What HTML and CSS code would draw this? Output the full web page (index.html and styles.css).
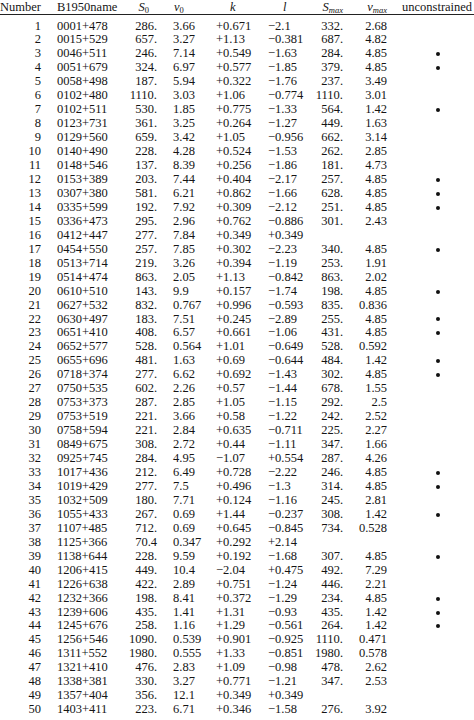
FILE: index.html
```html
<!DOCTYPE html>
<html>
<head>
<meta charset="utf-8">
<link rel="stylesheet" href="styles.css">
</head>
<body>
<div class="table">
  <div class="row head">
    <span class="n">Number</span>
    <span class="name">B1950name</span>
    <span class="s0 hs0"><i>S</i><sub>0</sub></span>
    <span class="nu hnu"><i>ν</i><sub>0</sub></span>
    <span class="k hk"><i>k</i></span>
    <span class="l hl"><i>l</i></span>
    <span class="smax"><i>S</i><sub><i>max</i></sub></span>
    <span class="numax"><i>ν</i><sub><i>max</i></sub></span>
    <span class="u hu">unconstrained</span>
  </div>
  <div class="rule"></div>
  <div class="body">
    <div class="row"><span class="n">1</span><span class="name">0001+478</span><span class="s0">286.</span><span class="nu">3.66</span><span class="k">+0.671</span><span class="l">−2.1</span><span class="smax">332.</span><span class="numax">2.68</span><span class="u"></span></div>
    <div class="row"><span class="n">2</span><span class="name">0015+529</span><span class="s0">657.</span><span class="nu">3.27</span><span class="k">+1.13</span><span class="l">−0.381</span><span class="smax">687.</span><span class="numax">4.82</span><span class="u"></span></div>
    <div class="row"><span class="n">3</span><span class="name">0046+511</span><span class="s0">246.</span><span class="nu">7.14</span><span class="k">+0.549</span><span class="l">−1.63</span><span class="smax">284.</span><span class="numax">4.85</span><span class="u"><span class="dot"></span></span></div>
    <div class="row"><span class="n">4</span><span class="name">0051+679</span><span class="s0">324.</span><span class="nu">6.97</span><span class="k">+0.577</span><span class="l">−1.85</span><span class="smax">379.</span><span class="numax">4.85</span><span class="u"><span class="dot"></span></span></div>
    <div class="row"><span class="n">5</span><span class="name">0058+498</span><span class="s0">187.</span><span class="nu">5.94</span><span class="k">+0.322</span><span class="l">−1.76</span><span class="smax">237.</span><span class="numax">3.49</span><span class="u"></span></div>
    <div class="row"><span class="n">6</span><span class="name">0102+480</span><span class="s0">1110.</span><span class="nu">3.03</span><span class="k">+1.06</span><span class="l">−0.774</span><span class="smax">1110.</span><span class="numax">3.01</span><span class="u"></span></div>
    <div class="row"><span class="n">7</span><span class="name">0102+511</span><span class="s0">530.</span><span class="nu">1.85</span><span class="k">+0.775</span><span class="l">−1.33</span><span class="smax">564.</span><span class="numax">1.42</span><span class="u"><span class="dot"></span></span></div>
    <div class="row"><span class="n">8</span><span class="name">0123+731</span><span class="s0">361.</span><span class="nu">3.25</span><span class="k">+0.264</span><span class="l">−1.27</span><span class="smax">449.</span><span class="numax">1.63</span><span class="u"></span></div>
    <div class="row"><span class="n">9</span><span class="name">0129+560</span><span class="s0">659.</span><span class="nu">3.42</span><span class="k">+1.05</span><span class="l">−0.956</span><span class="smax">662.</span><span class="numax">3.14</span><span class="u"></span></div>
    <div class="row"><span class="n">10</span><span class="name">0140+490</span><span class="s0">228.</span><span class="nu">4.28</span><span class="k">+0.524</span><span class="l">−1.53</span><span class="smax">262.</span><span class="numax">2.85</span><span class="u"></span></div>
    <div class="row"><span class="n">11</span><span class="name">0148+546</span><span class="s0">137.</span><span class="nu">8.39</span><span class="k">+0.256</span><span class="l">−1.86</span><span class="smax">181.</span><span class="numax">4.73</span><span class="u"></span></div>
    <div class="row"><span class="n">12</span><span class="name">0153+389</span><span class="s0">203.</span><span class="nu">7.44</span><span class="k">+0.404</span><span class="l">−2.17</span><span class="smax">257.</span><span class="numax">4.85</span><span class="u"><span class="dot"></span></span></div>
    <div class="row"><span class="n">13</span><span class="name">0307+380</span><span class="s0">581.</span><span class="nu">6.21</span><span class="k">+0.862</span><span class="l">−1.66</span><span class="smax">628.</span><span class="numax">4.85</span><span class="u"><span class="dot"></span></span></div>
    <div class="row"><span class="n">14</span><span class="name">0335+599</span><span class="s0">192.</span><span class="nu">7.92</span><span class="k">+0.309</span><span class="l">−2.12</span><span class="smax">251.</span><span class="numax">4.85</span><span class="u"><span class="dot"></span></span></div>
    <div class="row"><span class="n">15</span><span class="name">0336+473</span><span class="s0">295.</span><span class="nu">2.96</span><span class="k">+0.762</span><span class="l">−0.886</span><span class="smax">301.</span><span class="numax">2.43</span><span class="u"></span></div>
    <div class="row"><span class="n">16</span><span class="name">0412+447</span><span class="s0">277.</span><span class="nu">7.84</span><span class="k">+0.349</span><span class="l">+0.349</span><span class="smax"></span><span class="numax"></span><span class="u"></span></div>
    <div class="row"><span class="n">17</span><span class="name">0454+550</span><span class="s0">257.</span><span class="nu">7.85</span><span class="k">+0.302</span><span class="l">−2.23</span><span class="smax">340.</span><span class="numax">4.85</span><span class="u"><span class="dot"></span></span></div>
    <div class="row"><span class="n">18</span><span class="name">0513+714</span><span class="s0">219.</span><span class="nu">3.26</span><span class="k">+0.394</span><span class="l">−1.19</span><span class="smax">253.</span><span class="numax">1.91</span><span class="u"></span></div>
    <div class="row"><span class="n">19</span><span class="name">0514+474</span><span class="s0">863.</span><span class="nu">2.05</span><span class="k">+1.13</span><span class="l">−0.842</span><span class="smax">863.</span><span class="numax">2.02</span><span class="u"></span></div>
    <div class="row"><span class="n">20</span><span class="name">0610+510</span><span class="s0">143.</span><span class="nu">9.9</span><span class="k">+0.157</span><span class="l">−1.74</span><span class="smax">198.</span><span class="numax">4.85</span><span class="u"><span class="dot"></span></span></div>
    <div class="row"><span class="n">21</span><span class="name">0627+532</span><span class="s0">832.</span><span class="nu">0.767</span><span class="k">+0.996</span><span class="l">−0.593</span><span class="smax">835.</span><span class="numax">0.836</span><span class="u"></span></div>
    <div class="row"><span class="n">22</span><span class="name">0630+497</span><span class="s0">183.</span><span class="nu">7.51</span><span class="k">+0.245</span><span class="l">−2.89</span><span class="smax">255.</span><span class="numax">4.85</span><span class="u"><span class="dot"></span></span></div>
    <div class="row"><span class="n">23</span><span class="name">0651+410</span><span class="s0">408.</span><span class="nu">6.57</span><span class="k">+0.661</span><span class="l">−1.06</span><span class="smax">431.</span><span class="numax">4.85</span><span class="u"><span class="dot"></span></span></div>
    <div class="row"><span class="n">24</span><span class="name">0652+577</span><span class="s0">528.</span><span class="nu">0.564</span><span class="k">+1.01</span><span class="l">−0.649</span><span class="smax">528.</span><span class="numax">0.592</span><span class="u"></span></div>
    <div class="row"><span class="n">25</span><span class="name">0655+696</span><span class="s0">481.</span><span class="nu">1.63</span><span class="k">+0.69</span><span class="l">−0.644</span><span class="smax">484.</span><span class="numax">1.42</span><span class="u"><span class="dot"></span></span></div>
    <div class="row"><span class="n">26</span><span class="name">0718+374</span><span class="s0">277.</span><span class="nu">6.62</span><span class="k">+0.692</span><span class="l">−1.43</span><span class="smax">302.</span><span class="numax">4.85</span><span class="u"><span class="dot"></span></span></div>
    <div class="row"><span class="n">27</span><span class="name">0750+535</span><span class="s0">602.</span><span class="nu">2.26</span><span class="k">+0.57</span><span class="l">−1.44</span><span class="smax">678.</span><span class="numax">1.55</span><span class="u"></span></div>
    <div class="row"><span class="n">28</span><span class="name">0753+373</span><span class="s0">287.</span><span class="nu">2.85</span><span class="k">+1.05</span><span class="l">−1.15</span><span class="smax">292.</span><span class="numax">2.5</span><span class="u"></span></div>
    <div class="row"><span class="n">29</span><span class="name">0753+519</span><span class="s0">221.</span><span class="nu">3.66</span><span class="k">+0.58</span><span class="l">−1.22</span><span class="smax">242.</span><span class="numax">2.52</span><span class="u"></span></div>
    <div class="row"><span class="n">30</span><span class="name">0758+594</span><span class="s0">221.</span><span class="nu">2.84</span><span class="k">+0.635</span><span class="l">−0.711</span><span class="smax">225.</span><span class="numax">2.27</span><span class="u"></span></div>
    <div class="row"><span class="n">31</span><span class="name">0849+675</span><span class="s0">308.</span><span class="nu">2.72</span><span class="k">+0.44</span><span class="l">−1.11</span><span class="smax">347.</span><span class="numax">1.66</span><span class="u"></span></div>
    <div class="row"><span class="n">32</span><span class="name">0925+745</span><span class="s0">284.</span><span class="nu">4.95</span><span class="k">−1.07</span><span class="l">+0.554</span><span class="smax">287.</span><span class="numax">4.26</span><span class="u"></span></div>
    <div class="row"><span class="n">33</span><span class="name">1017+436</span><span class="s0">212.</span><span class="nu">6.49</span><span class="k">+0.728</span><span class="l">−2.22</span><span class="smax">246.</span><span class="numax">4.85</span><span class="u"><span class="dot"></span></span></div>
    <div class="row"><span class="n">34</span><span class="name">1019+429</span><span class="s0">277.</span><span class="nu">7.5</span><span class="k">+0.496</span><span class="l">−1.3</span><span class="smax">314.</span><span class="numax">4.85</span><span class="u"><span class="dot"></span></span></div>
    <div class="row"><span class="n">35</span><span class="name">1032+509</span><span class="s0">180.</span><span class="nu">7.71</span><span class="k">+0.124</span><span class="l">−1.16</span><span class="smax">245.</span><span class="numax">2.81</span><span class="u"></span></div>
    <div class="row"><span class="n">36</span><span class="name">1055+433</span><span class="s0">267.</span><span class="nu">0.69</span><span class="k">+1.44</span><span class="l">−0.237</span><span class="smax">308.</span><span class="numax">1.42</span><span class="u"><span class="dot"></span></span></div>
    <div class="row"><span class="n">37</span><span class="name">1107+485</span><span class="s0">712.</span><span class="nu">0.69</span><span class="k">+0.645</span><span class="l">−0.845</span><span class="smax">734.</span><span class="numax">0.528</span><span class="u"></span></div>
    <div class="row"><span class="n">38</span><span class="name">1125+366</span><span class="s0">70.4</span><span class="nu">0.347</span><span class="k">+0.292</span><span class="l">+2.14</span><span class="smax"></span><span class="numax"></span><span class="u"></span></div>
    <div class="row"><span class="n">39</span><span class="name">1138+644</span><span class="s0">228.</span><span class="nu">9.59</span><span class="k">+0.192</span><span class="l">−1.68</span><span class="smax">307.</span><span class="numax">4.85</span><span class="u"><span class="dot"></span></span></div>
    <div class="row"><span class="n">40</span><span class="name">1206+415</span><span class="s0">449.</span><span class="nu">10.4</span><span class="k">−2.04</span><span class="l">+0.475</span><span class="smax">492.</span><span class="numax">7.29</span><span class="u"></span></div>
    <div class="row"><span class="n">41</span><span class="name">1226+638</span><span class="s0">422.</span><span class="nu">2.89</span><span class="k">+0.751</span><span class="l">−1.24</span><span class="smax">446.</span><span class="numax">2.21</span><span class="u"></span></div>
    <div class="row"><span class="n">42</span><span class="name">1232+366</span><span class="s0">198.</span><span class="nu">8.41</span><span class="k">+0.372</span><span class="l">−1.29</span><span class="smax">234.</span><span class="numax">4.85</span><span class="u"><span class="dot"></span></span></div>
    <div class="row"><span class="n">43</span><span class="name">1239+606</span><span class="s0">435.</span><span class="nu">1.41</span><span class="k">+1.31</span><span class="l">−0.93</span><span class="smax">435.</span><span class="numax">1.42</span><span class="u"><span class="dot"></span></span></div>
    <div class="row"><span class="n">44</span><span class="name">1245+676</span><span class="s0">258.</span><span class="nu">1.16</span><span class="k">+1.29</span><span class="l">−0.561</span><span class="smax">264.</span><span class="numax">1.42</span><span class="u"><span class="dot"></span></span></div>
    <div class="row"><span class="n">45</span><span class="name">1256+546</span><span class="s0">1090.</span><span class="nu">0.539</span><span class="k">+0.901</span><span class="l">−0.925</span><span class="smax">1110.</span><span class="numax">0.471</span><span class="u"></span></div>
    <div class="row"><span class="n">46</span><span class="name">1311+552</span><span class="s0">1980.</span><span class="nu">0.555</span><span class="k">+1.33</span><span class="l">−0.851</span><span class="smax">1980.</span><span class="numax">0.578</span><span class="u"></span></div>
    <div class="row"><span class="n">47</span><span class="name">1321+410</span><span class="s0">476.</span><span class="nu">2.83</span><span class="k">+1.09</span><span class="l">−0.98</span><span class="smax">478.</span><span class="numax">2.62</span><span class="u"></span></div>
    <div class="row"><span class="n">48</span><span class="name">1338+381</span><span class="s0">330.</span><span class="nu">3.27</span><span class="k">+0.771</span><span class="l">−1.21</span><span class="smax">347.</span><span class="numax">2.53</span><span class="u"></span></div>
    <div class="row"><span class="n">49</span><span class="name">1357+404</span><span class="s0">356.</span><span class="nu">12.1</span><span class="k">+0.349</span><span class="l">+0.349</span><span class="smax"></span><span class="numax"></span><span class="u"></span></div>
    <div class="row"><span class="n">50</span><span class="name">1403+411</span><span class="s0">223.</span><span class="nu">6.71</span><span class="k">+0.346</span><span class="l">−1.58</span><span class="smax">276.</span><span class="numax">3.92</span><span class="u"></span></div>
  </div>
</div>
</body>
</html>
```
FILE: styles.css
```css
html, body {
  margin: 0;
  padding: 0;
  background: #ffffff;
}
body {
  font-family: "Liberation Serif", "Times New Roman", serif;
  font-size: 12.5px;
  color: #151515;
  overflow: hidden;
}
.table {
  width: 474px;
}
.row {
  display: grid;
  grid-template-columns: 41px 79px 37px 59px 52px 37px 38px 44px 87px;
  height: 13.96px;
  line-height: 13.96px;
  white-space: nowrap;
}
.row > span {
  display: block;
}
.head {
  height: 14px;
  line-height: 14px;
}
.head .n {
  padding-right: 0;
}
.head sub {
  vertical-align: -1.5px;
}
.rule {
  height: 1px;
  background: #222;
  width: 474px;
}
.body {
  padding-top: 4.5px;
}
.n { text-align: right; }
.name { padding-left: 16px; }
.s0 { text-align: right; }
.nu { padding-left: 16px; }
.k { padding-left: 0; }
.l { padding-left: 0; }
.smax { text-align: right; }
.numax { text-align: right; }
.u { display: flex !important; align-items: center; padding-left: 49px; }
.hs0 { padding-right: 8px; }
.hnu { padding-left: 17px; }
.hk { padding-left: 14px; }
.hl { padding-left: 15px; }
.hu { padding-left: 15px; display: block !important; }
sub {
  font-size: 8.5px;
  vertical-align: -2px;
  line-height: 0;
}
.dot {
  display: block;
  width: 4px;
  height: 4px;
  border-radius: 50%;
  background: #111;
}
```
